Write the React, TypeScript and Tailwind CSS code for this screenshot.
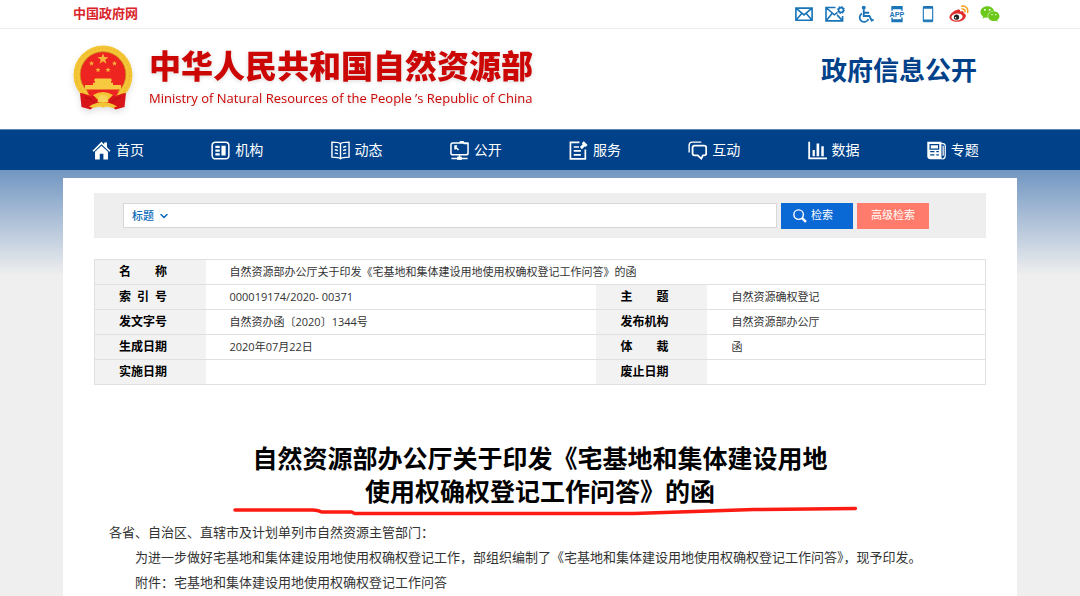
import type { ReactNode } from "react";
import { FaWeixin } from "react-icons/fa";
import { ChevronDown } from "lucide-react";

const stroke = { fill: "none", stroke: "currentColor", strokeWidth: 1.6 };

function Icon({ children, className = "size-[18px]" }: { children: ReactNode; className?: string }) {
  return (
    <svg viewBox="0 0 20 20" className={`shrink-0 ${className}`} aria-hidden="true">
      {children}
    </svg>
  );
}

const navItems: { label: string; icon: ReactNode }[] = [
  {
    label: "首页",
    icon: (
      <g fill="currentColor">
        <path d="M.5 10.200 10 .9l2.800 2.700V1.500h3v5l3.700 3.700-1.200 1.200L10 3.400l-8.300 8z" />
        <path d="M3.200 11.400 10 4.900l6.800 6.500V19.500h-4.800v-6H8.200v6h-5z" />
      </g>
    ),
  },
  {
    label: "机构",
    icon: (
      <g>
        <rect x="1.2" y="1.2" width="17.6" height="17.6" rx="3.5" {...stroke} />
        <path d="M4.600 5h4.600v2.300H4.600zM4.600 9h4.600v2.300H4.600zM4.600 13h4.600v2.300H4.600zM11 5h4.400v10.300H11z" fill="currentColor" />
      </g>
    ),
  },
  {
    label: "动态",
    icon: (
      <path
        d="M10 2.800C8.500 1.300 6 1.200 1 1.200V17c4.500 0 7.400.2 9 1.800 1.600-1.600 4.500-1.800 9-1.800V1.200C14 1.200 11.500 1.300 10 2.800zv16M4 5.800c1.300 0 2.200.2 3.200.8M4 9.300c1.300 0 2.200.2 3.200.8M4 12.800c1.300 0 2.200.2 3.200.8M16 5.800c-1.300 0-2.200.2-3.200.8M16 9.300c-1.300 0-2.200.2-3.200.8M16 12.800c-1.300 0-2.200.2-3.200.8"
        {...stroke}
        strokeWidth="1.5"
      />
    ),
  },
  {
    label: "公开",
    icon: (
      <g {...stroke}>
        <path d="M11 2H3Q1 2 1 4v8.500q0 2 2 2h14q2 0 2-2V2.500h-4L13.800.900H11V2h8M4.500 5.300h3M9 9.500 5.300 6v3M10 14.500v4M1.500 18.300h17" />
        <path d="M7.500 18.200h5" strokeWidth="3.400" />
      </g>
    ),
  },
  {
    label: "服务",
    icon: (
      <g {...stroke}>
        <path d="M11 1.500H1.500v17.300h15.700V9M5 6.300h5.500M5 10.500h7.500M5 14.500h7.500" strokeWidth="1.800" />
        <path d="m12.500 7.500 5-5M14.500 1.300l4 4" strokeWidth="3" />
      </g>
    ),
  },
  {
    label: "互动",
    icon: (
      <g {...stroke} strokeWidth="1.900">
        <path d="M7 4.800h10q2.200 0 2.200 2.200v6q0 2.200-2.200 2.200h-1.300L14 18.500l-3.800-3.300H7q-2.200 0-2.200-2.200V7Q4.800 4.800 7 4.800z" />
        <path d="M1.200 12V4.500Q1.200 1.200 4.500 1.200H14" strokeWidth="1.500" />
      </g>
    ),
  },
  {
    label: "数据",
    icon: <path d="M.3.800h1.900v16.600h17.800v1.900H.3zM4.800 9.500h2.400v6.500H4.800zM9 2.500h2.800V16H9zM14 5.500h2.600V16H14z" fill="currentColor" />,
  },
  {
    label: "专题",
    icon: (
      <g>
        <path d="M.3.700h14.900v15q0 3.500 2 3.500H4Q.3 19.200.3 15.800z" fill="currentColor" />
        <path d="M15 2.500q4.200 0 4.200 2.500v10.500q0 3.200-3 3.200M17 5v10.500" {...stroke} strokeWidth="1.300" />
        <path d="M3.300 3.800h8.900v4.700H3.300zM3.300 11.200h4.500M3.300 14.500h4.500M9.800 11.200h2.700M9.800 14.500h2.700" fill="none" stroke="#00418a" strokeWidth="1.300" />
      </g>
    ),
  },
];

const toolLinks: { label: string; icon: ReactNode }[] = [
  {
    label: "邮箱",
    icon: (
      <Icon>
        <path d="M1 3.500h18v13.400H1zl9 7.500 9-7.500M1 16.900l6.500-7.500M19 16.900l-6.500-7.500" {...stroke} strokeWidth="1.800" />
      </Icon>
    ),
  },
  {
    label: "邮件设置",
    icon: (
      <Icon className="size-5">
        <path d="M10.500 3.500H1v13.400h16.600v-5M1 3.500l8.300 7.300 3.200-2.300M1 16.900l6-7.500M17.600 16.900l-5.500-6" {...stroke} />
        <circle cx="16" cy="6" r="2.400" {...stroke} />
        <circle cx="16" cy="6" r="3.600" fill="none" stroke="currentColor" strokeDasharray="1.410 1.410" />
      </Icon>
    ),
  },
  {
    label: "无障碍",
    icon: (
      <Icon>
        <circle cx="7.500" cy="3" r="2.200" fill="currentColor" />
        <path d="M7.500 5v7.200h6.300l2.500 5 2.200-1M8 8.600h5.500" {...stroke} strokeWidth="2" />
        <path d="M5.500 9.500a5 5 0 1 0 7.200 6" {...stroke} strokeWidth="1.900" />
      </Icon>
    ),
  },
  {
    label: "移动应用",
    icon: (
      <Icon>
        <path d="M4.500 6.500V2h11v4.500M4.500 14v4.500h11V14" {...stroke} />
        <path d="M4.500 3.300h11M4.500 17h11" {...stroke} strokeWidth="2.600" />
        <text x="10" y="13" textAnchor="middle" fill="currentColor" className="font-['Liberation_Sans'] text-[8px] font-bold">APP</text>
      </Icon>
    ),
  },
  {
    label: "手机版",
    icon: (
      <Icon>
        <rect x="4.800" y="1.800" width="10.400" height="16.800" rx="1" {...stroke} strokeWidth="1.200" />
        <path d="M4.800 3h10.400M4.800 17.200h10.400" {...stroke} strokeWidth="2.400" />
      </Icon>
    ),
  },
  {
    label: "微博",
    icon: (
      <svg viewBox="0 0 20 20" className="size-5 shrink-0" aria-hidden="true">
        <path d="M8 6c1.800-.8 3.500-.5 3 1.600 2-.8 4.200-.6 3.600 1.600 2 .6 2.800 2 1.900 4C15.300 16 12 17.800 8 17.800S.5 16 .5 13.300C.5 10.500 5 6.300 8 6z" fill="#e02b2b" />
        <ellipse cx="8" cy="13" rx="5.600" ry="3.500" fill="#fff" transform="rotate(-8 8 13)" />
        <circle cx="7.500" cy="13.200" r="2.600" fill="#222" />
        <circle cx="6.600" cy="13.800" r=".8" fill="#fff" />
        <path d="M12.600 2.200c4-.8 7 2.200 6 6.200M13 5c2-.3 3.300 1 2.900 2.800" fill="none" stroke="#f9a01b" strokeWidth="1.500" strokeLinecap="round" />
      </svg>
    ),
  },
  { label: "微信", icon: <FaWeixin className="size-5 text-[#6cc91c]" /> },
];

function Star({ x, y, r }: { x: number; y: number; r: number }) {
  const points = Array.from({ length: 10 }, (_, i) => {
    const a = (Math.PI * i) / 5 - Math.PI / 2;
    const d = i % 2 ? r * 0.4 : r;
    return `${x + d * Math.cos(a)},${y + d * Math.sin(a)}`;
  }).join(" ");
  return <polygon points={points} fill="#f6b63c" />;
}

function Emblem() {
  return (
    <svg viewBox="0 0 60 66" className="h-[66px] w-[60px] shrink-0 drop-shadow-md" aria-hidden="true">
      <circle cx="30" cy="30" r="29.500" fill="#f4c535" />
      <circle cx="30" cy="30" r="26.800" fill="none" stroke="#e2ad27" strokeWidth=".8" strokeDasharray="2 2" />
      <circle cx="30" cy="29.500" r="22.800" fill="#ee2420" stroke="#c98c1c" strokeWidth=".8" />
      <Star x={30} y={14} r={5.800} />
      <Star x={18.500} y={18.500} r={2.800} />
      <Star x={41.500} y={18.500} r={2.800} />
      <Star x={25} y={25} r={2.800} />
      <Star x={35} y={25} r={2.800} />
      <path d="M22 33.500h16l1.200 2.200h-1.200v2h2v2.300h8v4.500H12V40h8v-2.300h2v-2h-1.200z" fill="#f6c941" />
      <path d="M14 46.500h32l-5 8H19z" fill="#ee2420" />
      <path d="M7 48q7 1 11 3.500l4-2 3.500 4.500 9 0 3.500-4.500 4 2Q46 49 53 48l-1.500 14-9 2.500L37 60H23l-5.500 4.500-9-2.500z" fill="#d8161a" />
      <path d="M20 50q5-3 10-3t10 3l-5 5h-10z" fill="#f4c535" />
      <path d="M26 51.500q4-3.500 8 0l1.500 5.500h-11z" fill="#f7d45a" />
      <path d="M16 61.500q7-4.500 14-4.500t14 4.500l-4 1.500-6-1.500-4 1-4-1-6 1.500z" fill="#f4c535" />
      <path d="M12 52q6 1 10 6M48 52q-6 1-10 6" fill="none" stroke="#a90d12" strokeWidth=".8" />
    </svg>
  );
}

const rows = [
  ["索\u2002引\u2002号", "000019174/2020- 00371", "主\u3000\u3000题", "自然资源确权登记"],
  ["发文字号", "自然资办函〔2020〕1344号", "发布机构", "自然资源部办公厅"],
  ["生成日期", "2020年07月22日", "体\u3000\u3000裁", "函"],
  ["实施日期", "", "废止日期", ""],
];

function Label({ children }: { children: ReactNode }) {
  return (
    <th scope="row" className="whitespace-pre bg-[#f2f2f2] pl-6 text-left text-xs leading-6 font-bold text-black">
      {children}
    </th>
  );
}

export default function App() {
  return (
    <div className="bg-white font-['Open_Sans','Noto_Sans_CJK_SC',sans-serif] text-[#333]">
      <div className="border-b border-[#ececec]">
        <div className="mx-auto flex h-7 max-w-[954px] items-center justify-between pr-[17px] pl-2.5">
          <a href="#" className="text-[13px] font-bold text-[#d9252b]">中国政府网</a>
          <div className="flex items-center gap-[11px] text-[#1a74b8]">
            {toolLinks.map((t) => (
              <a key={t.label} href="#" aria-label={t.label} className="flex w-5 justify-center">{t.icon}</a>
            ))}
          </div>
        </div>
      </div>

      <header className="mx-auto flex h-[100px] max-w-[954px] items-center justify-between pr-10 pb-0.5 pl-2.5">
        <div className="flex items-center gap-4">
          <Emblem />
          <div className="text-[#cc0505]">
            <h1 className="mb-1 text-[32px] leading-9 font-black drop-shadow-sm">中华人民共和国自然资源部</h1>
            <p className="text-[13px] leading-5 drop-shadow-sm">Ministry of Natural Resources of the People ’s Republic of China</p>
          </div>
        </div>
        <div className="pb-4 text-[26px] font-bold text-[#00418a]">政府信息公开</div>
      </header>

      <nav className="border-t border-[#5f87b5] bg-[#00418a]">
        <ul className="mx-auto grid h-10 max-w-[954px] grid-cols-8 text-white">
          {navItems.map((n) => (
            <li key={n.label} className="flex">
              <a href="#" className="flex items-center gap-[5px] pl-[29px] text-sm">
                <Icon className="size-[19px]">{n.icon}</Icon>
                {n.label}
              </a>
            </li>
          ))}
        </ul>
      </nav>

      <div className="bg-[#efefef] bg-[linear-gradient(to_bottom,#7196c2,#efefef_106px)] pt-2">
        <main className="mx-auto max-w-[954px] bg-white px-[31px] pt-[15px] pb-6">
          <form className="flex h-[45px] items-center gap-1 bg-[#eee] pr-[57px] pl-[29px]" onSubmit={(e) => e.preventDefault()}>
            <div className="flex h-[25px] flex-1 border border-[#d8d8d8] bg-white">
              <div className="relative flex items-center">
                <select aria-label="检索字段" className="appearance-none pr-5 pl-2 text-[11px] leading-5 font-medium text-[#0a6ab8]">
                  <option>标题</option>
                  <option>全文</option>
                </select>
                <ChevronDown strokeWidth={3} className="pointer-events-none absolute right-1 size-3 text-[#0a6ab8]" />
              </div>
              <input aria-label="检索词" className="min-w-0 flex-1 px-2 text-[11px] outline-none" />
            </div>
            <button type="submit" className="flex h-[26px] w-[72px] items-center gap-1 bg-[#0b69d6] pl-3 text-[11px] text-white">
              <Icon className="size-3.5">
                <circle cx="8" cy="8" r="6.800" {...stroke} strokeWidth="2" />
                <path d="m13 13 5.500 5.500" {...stroke} strokeWidth="3.400" />
              </Icon>
              检索
            </button>
            <button type="button" className="h-[26px] w-[72px] bg-[#ff7b6b] text-[11px] text-white">高级检索</button>
          </form>

          <table className="mt-[21px] w-full table-fixed border-collapse border border-[#e0e0e0] text-[11px] text-[#333]">
            <colgroup>
              <col className="w-[111px]" />
              <col />
              <col className="w-[111px]" />
              <col className="w-[278px]" />
            </colgroup>
            <tbody>
              <tr>
                <Label>{"名\u3000\u3000称"}</Label>
                <td colSpan={3} className="pl-6">自然资源部办公厅关于印发《宅基地和集体建设用地使用权确权登记工作问答》的函</td>
              </tr>
              {rows.map(([a, b, c, d]) => (
                <tr key={a} className="border-t border-[#e0e0e0]">
                  <Label>{a}</Label>
                  <td className="pl-6">{b}</td>
                  <Label>{c}</Label>
                  <td className="pl-6">{d}</td>
                </tr>
              ))}
            </tbody>
          </table>

          <article className="mt-[57px]">
            <h2 className="text-center text-[25px] leading-[33px] font-bold text-black">
              自然资源部办公厅关于印发《宅基地和集体建设用地
              <br />
              使用权确权登记工作问答》的函
            </h2>
            <svg viewBox="0 0 626 10" preserveAspectRatio="none" className="-mt-0.5 ml-[15.6%] block h-2.5 w-[70%]" aria-hidden="true">
              <path d="M2 4h78q5 0 9 2h30l3 1.500h280l60-2 60-2 102-1" fill="none" stroke="#fb1b12" strokeWidth="3.500" strokeLinecap="round" strokeLinejoin="round" />
            </svg>
            <div className="mt-1 pl-[15px] text-[13px] leading-[25px]">
              <p>各省、自治区、直辖市及计划单列市自然资源主管部门：</p>
              <p className="indent-[2em]">为进一步做好宅基地和集体建设用地使用权确权登记工作，部组织编制了《宅基地和集体建设用地使用权确权登记工作问答》，现予印发。</p>
              <p className="indent-[2em]">附件：宅基地和集体建设用地使用权确权登记工作问答</p>
            </div>
          </article>
        </main>
      </div>
    </div>
  );
}
